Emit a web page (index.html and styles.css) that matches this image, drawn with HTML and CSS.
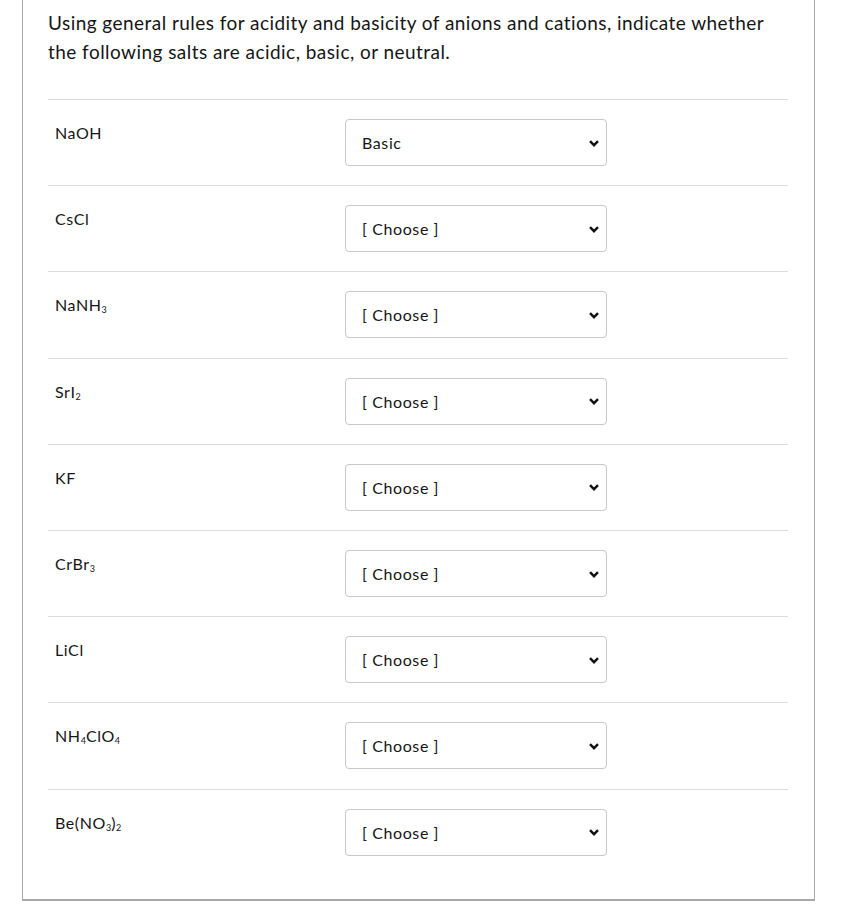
FILE: index.html
```html
<!DOCTYPE html>
<html lang="en">
<head>
<meta charset="utf-8">
<title>Salts acidity</title>
<link rel="stylesheet" href="styles.css">
</head>
<body>
<div class="question">
  <p class="prompt">Using general rules for acidity and basicity of anions and cations, indicate whether the following salts are acidic, basic, or neutral.</p>
  <div class="rows">
    <div class="row">
      <div class="label">NaOH</div>
      <div class="select"><span class="value">Basic</span><svg class="chev" width="10" height="7" viewBox="0 0 10 7"><polyline points="1,1.2 5,5.2 9,1.2" fill="none" stroke="#111" stroke-width="2.4"/></svg></div>
    </div>
    <div class="row">
      <div class="label">CsCl</div>
      <div class="select"><span class="value">[ Choose ]</span><svg class="chev" width="10" height="7" viewBox="0 0 10 7"><polyline points="1,1.2 5,5.2 9,1.2" fill="none" stroke="#111" stroke-width="2.4"/></svg></div>
    </div>
    <div class="row">
      <div class="label">NaNH<sub>3</sub></div>
      <div class="select"><span class="value">[ Choose ]</span><svg class="chev" width="10" height="7" viewBox="0 0 10 7"><polyline points="1,1.2 5,5.2 9,1.2" fill="none" stroke="#111" stroke-width="2.4"/></svg></div>
    </div>
    <div class="row">
      <div class="label">SrI<sub>2</sub></div>
      <div class="select"><span class="value">[ Choose ]</span><svg class="chev" width="10" height="7" viewBox="0 0 10 7"><polyline points="1,1.2 5,5.2 9,1.2" fill="none" stroke="#111" stroke-width="2.4"/></svg></div>
    </div>
    <div class="row">
      <div class="label">KF</div>
      <div class="select"><span class="value">[ Choose ]</span><svg class="chev" width="10" height="7" viewBox="0 0 10 7"><polyline points="1,1.2 5,5.2 9,1.2" fill="none" stroke="#111" stroke-width="2.4"/></svg></div>
    </div>
    <div class="row">
      <div class="label">CrBr<sub>3</sub></div>
      <div class="select"><span class="value">[ Choose ]</span><svg class="chev" width="10" height="7" viewBox="0 0 10 7"><polyline points="1,1.2 5,5.2 9,1.2" fill="none" stroke="#111" stroke-width="2.4"/></svg></div>
    </div>
    <div class="row">
      <div class="label">LiCl</div>
      <div class="select"><span class="value">[ Choose ]</span><svg class="chev" width="10" height="7" viewBox="0 0 10 7"><polyline points="1,1.2 5,5.2 9,1.2" fill="none" stroke="#111" stroke-width="2.4"/></svg></div>
    </div>
    <div class="row">
      <div class="label">NH<sub>4</sub>ClO<sub>4</sub></div>
      <div class="select"><span class="value">[ Choose ]</span><svg class="chev" width="10" height="7" viewBox="0 0 10 7"><polyline points="1,1.2 5,5.2 9,1.2" fill="none" stroke="#111" stroke-width="2.4"/></svg></div>
    </div>
    <div class="row">
      <div class="label">Be(NO<sub>3</sub>)<sub>2</sub></div>
      <div class="select"><span class="value">[ Choose ]</span><svg class="chev" width="10" height="7" viewBox="0 0 10 7"><polyline points="1,1.2 5,5.2 9,1.2" fill="none" stroke="#111" stroke-width="2.4"/></svg></div>
    </div>
  </div>
</div>
</body>
</html>
```

FILE: styles.css
```css
html, body {
  margin: 0;
  padding: 0;
  background: #ffffff;
}

body {
  font-family: Lato, "Open Sans", "Liberation Sans", sans-serif;
  color: #161616;
}

.question {
  margin-left: 22px;
  width: 793px;
  border-left: 1px solid #a8a8a8;
  border-right: 1px solid #a8a8a8;
  border-bottom: 2px solid #a8a8a8;
  padding: 8px 26px 24px 25px;
  box-sizing: border-box;
}

.prompt {
  margin: 0 0 33px 0;
  font-size: 19px;
  letter-spacing: 0.45px;
  line-height: 29px;
}

.row {
  display: flex;
  align-items: flex-start;
  border-top: 1px solid #dcdcdc;
  padding: 19.1px 0;
}

.label {
  width: 297px;
  padding-left: 7px;
  box-sizing: border-box;
  font-size: 16px;
  letter-spacing: 0.6px;
  line-height: 24px;
  padding-top: 2px;
}

.label sub {
  font-size: 9px;
  letter-spacing: 0;
  line-height: 0;
  vertical-align: -1.5px;
}

.select {
  width: 262px;
  height: 47px;
  box-sizing: border-box;
  border: 1px solid #c8c8c8;
  border-radius: 4px;
  display: flex;
  align-items: center;
  justify-content: space-between;
  padding: 0 7px 0 16px;
  font-size: 16px;
  letter-spacing: 0.6px;
}

.chev {
  display: block;
  margin-top: 1px;
}
```
